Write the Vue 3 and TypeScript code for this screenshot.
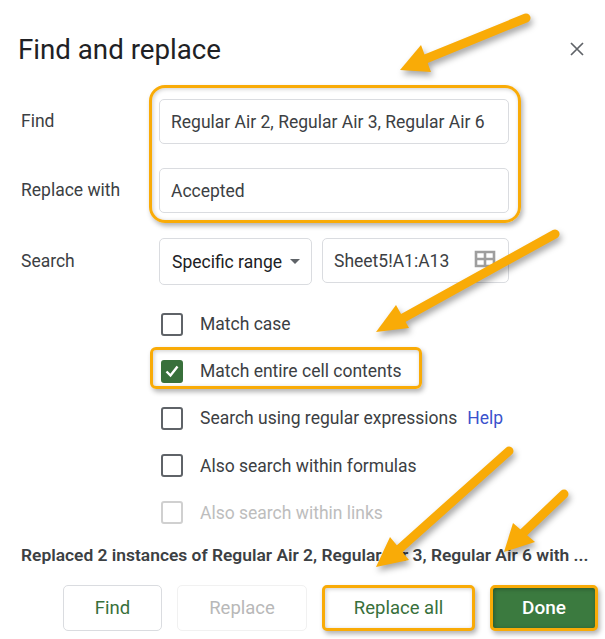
<script setup lang="ts">
interface Option {
  label: string
  checked?: boolean
  disabled?: boolean
  help?: boolean
  highlight?: boolean
}

interface Arrow {
  tail: string
  neck: string
  head: string
}

const options: Option[] = [
  { label: 'Match case' },
  { label: 'Match entire cell contents', checked: true, highlight: true },
  { label: 'Search using regular expressions', help: true },
  { label: 'Also search within formulas' },
  { label: 'Also search within links', disabled: true },
]

// callout arrows drawn over the dialog
const arrows: Arrow[] = [
  { tail: '526,18', neck: '418,62', head: '400,70 421,45 431,72' },
  { tail: '555,234', neck: '396,322', head: '376,332 396,305 409,328' },
  { tail: '509,451', neck: '396,552', head: '376,567 390,537 409,560' },
  { tail: '564,494', neck: '520,536', head: '504,552 513,523 535,542' },
]
</script>

<template>
  <div class="dialog">
    <header class="head">
      <h1>Find and replace</h1>
      <svg class="close" width="16" height="16" viewBox="0 0 16 16">
        <path d="M2 2L14 14M14 2L2 14" stroke="#5f6368" stroke-width="1.7" fill="none" />
      </svg>
    </header>

    <div class="fields">
      <div class="mark mark-fields"></div>
      <label class="row row-find">
        <span class="label">Find</span>
        <span class="input">Regular Air 2, Regular Air 3, Regular Air 6</span>
      </label>
      <label class="row row-replace">
        <span class="label">Replace with</span>
        <span class="input">Accepted</span>
      </label>
      <div class="row row-search">
        <span class="label">Search</span>
        <div class="select">
          Specific range
          <i class="caret"></i>
        </div>
        <div class="range">
          Sheet5!A1:A13
          <svg class="grid-icon" width="22" height="18" viewBox="0 0 22 18">
            <path d="M2 2H20V16H2ZM2 9H20M11 2V16" stroke="#9e9e9e" stroke-width="2.6" fill="none" />
          </svg>
        </div>
      </div>
    </div>

    <ul class="options">
      <li v-for="o in options" :key="o.label" :class="{ off: o.disabled }">
        <div v-if="o.highlight" class="mark mark-option"></div>
        <span class="box" :class="{ on: o.checked }">
          <svg v-if="o.checked" width="18" height="18" viewBox="0 0 18 18">
            <path d="M3.5 9.5L7.5 13.5L14.5 4.5" stroke="#fff" stroke-width="2.4" fill="none" />
          </svg>
        </span>
        <span>{{ o.label }}</span>
        <a v-if="o.help" class="help">Help</a>
      </li>
    </ul>

    <p class="status">Replaced 2 instances of Regular Air 2, Regular Air 3, Regular Air 6 with ...</p>

    <footer class="actions">
      <button class="btn btn-find">Find</button>
      <button class="btn btn-replace">Replace</button>
      <button class="btn btn-all">Replace all</button>
      <button class="btn btn-done">Done</button>
    </footer>

    <svg class="arrows" width="605" height="639" viewBox="0 0 605 639">
      <g v-for="a in arrows" :key="a.tail" class="arrow">
        <polyline :points="a.tail + ' ' + a.neck" fill="none" stroke="#f9ab07" stroke-width="9" stroke-linecap="round" />
        <polygon :points="a.head" fill="#f9ab07" />
      </g>
    </svg>
  </div>
</template>

<style scoped>
.dialog {
  position: relative;
  width: 605px;
  height: 639px;
  overflow: hidden;
  background: #fff;
  font-family: Roboto, "Liberation Sans", sans-serif;
  font-size: 17.5px;
  color: #3c4043;
  box-sizing: border-box;
  padding: 30px 0 0;
}

.head {
  display: flex;
  align-items: center;
  justify-content: space-between;
  padding: 1px 20px 0 18px;
  height: 38px;
  box-sizing: border-box;
}

.head h1 {
  margin: 0;
  font-size: 27.7px;
  font-weight: 400;
  color: #202124;
}

.close {
  margin-top: -2px;
}

.fields {
  position: relative;
  margin-top: 31px;
}

.row {
  display: flex;
  align-items: flex-start;
}

.row-replace {
  margin-top: 24px;
}

.row-search {
  margin-top: 25px;
}

.label {
  width: 159px;
  padding-left: 21px;
  box-sizing: border-box;
  line-height: 45px;
}

.row-search .label {
  line-height: 47px;
}

.input,
.select,
.range {
  box-sizing: border-box;
  height: 45px;
  border: 1px solid #dadce0;
  border-radius: 5px;
  display: flex;
  align-items: center;
  background: #fff;
}

.input {
  width: 350px;
  padding-left: 11px;
}

.select {
  width: 153px;
  height: 47px;
  padding-left: 12px;
  color: #202124;
}

.caret {
  margin-left: 8px;
  border-style: solid;
  border-width: 5px 5px 0;
  border-color: #5f6368 transparent transparent;
}

.range {
  width: 187px;
  margin-left: 10px;
  padding-left: 11px;
  justify-content: space-between;
  padding-right: 12px;
}

.grid-icon {
  margin-top: -3px;
}

.mark {
  position: absolute;
  box-sizing: border-box;
  border: 3px solid #f9ab07;
  box-shadow: 2px 3px 5px rgba(0, 0, 0, 0.3), inset 1px 1px 4px rgba(0, 0, 0, 0.2);
  pointer-events: none;
}

.mark-fields {
  left: 149px;
  top: -14px;
  width: 372px;
  height: 138px;
  border-radius: 16px;
}

.options {
  list-style: none;
  margin: 27px 0 0;
  padding: 0 0 0 161px;
}

.options li {
  position: relative;
  display: flex;
  align-items: center;
  height: 24px;
  margin-bottom: 23.2px;
}

.options li:last-child {
  margin-bottom: 0;
}

.off {
  color: #bdbdbd;
}

.box {
  box-sizing: border-box;
  width: 22px;
  height: 23px;
  margin-right: 17px;
  border: 2px solid #5f6368;
  border-radius: 3px;
  flex: none;
}

.off .box {
  border-color: #d0d0d0;
}

.box.on {
  background: #38703b;
  border-color: #38703b;
  display: flex;
  align-items: center;
  justify-content: center;
}

.mark-option {
  left: -11px;
  top: -12px;
  width: 272px;
  height: 42px;
  border-radius: 6px;
}

.help {
  margin-left: 10px;
  color: #3b52cc;
}

.status {
  margin: 20px 0 0;
  padding-left: 21px;
  font-size: 17.4px;
  font-weight: 600;
  color: #3c4043;
  white-space: nowrap;
}

.actions {
  display: flex;
  margin-top: 20px;
  padding-left: 63px;
  gap: 15px;
}

.btn {
  position: relative;
  box-sizing: border-box;
  height: 46px;
  background: #fff;
  border: 1px solid #dadce0;
  border-radius: 5px;
  font: 400 18.5px Roboto, "Liberation Sans", sans-serif;
  color: #38703b;
}

.btn-find {
  width: 99px;
}

.btn-replace {
  width: 130px;
  color: #b8b8b8;
  border-color: #f1f1f1;
}

.btn-all {
  width: 153px;
  border: 3px solid #f9ab07;
  box-shadow: 2px 3px 5px rgba(0, 0, 0, 0.3), inset 1px 1px 4px rgba(0, 0, 0, 0.2);
}

.btn-done {
  width: 108px;
  background: #3b7a3f;
  color: #fff;
  font-size: 19px;
  font-weight: 500;
  border: 3px solid #f9ab07;
  box-shadow: 2px 3px 5px rgba(0, 0, 0, 0.3), inset 1px 1px 4px rgba(0, 0, 0, 0.3);
}

.arrows {
  position: absolute;
  left: 0;
  top: 0;
  pointer-events: none;
}

.arrow {
  filter: drop-shadow(2px 4px 3px rgba(0, 0, 0, 0.35));
}
</style>
